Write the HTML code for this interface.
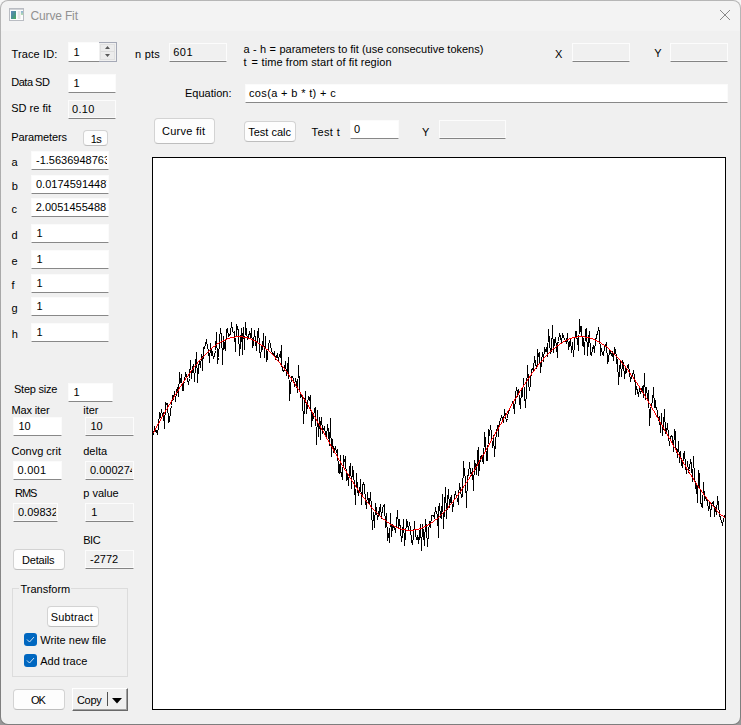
<!DOCTYPE html>
<html lang="en"><head><meta charset="utf-8"><title>Curve Fit</title>
<style>
html,body{margin:0;padding:0}
body{width:741px;height:725px;position:relative;overflow:hidden;background:linear-gradient(to bottom,#f6f6f6 0,#f6f6f6 40px,#989898 690px,#989898 100%);font:11px "Liberation Sans",sans-serif;color:#000}
#win{position:absolute;left:0;top:0;width:741px;height:725px;box-sizing:border-box;border:1px solid transparent;border-radius:8px;
 background:linear-gradient(to bottom,#f3f3f3 0,#f3f3f3 30px,#f0f0f0 30px,#f0f0f0 100%) padding-box,linear-gradient(to bottom,#b6b6b6 0,#a8a8a8 300px,#8a8a8a 500px,#7e7e7e 100%) border-box}
#win>*{position:absolute}
.t{white-space:nowrap;line-height:13px;height:13px}
.in{box-sizing:border-box;background:#fff;border:1px solid #fbfbfb;border-bottom:1px solid #888;border-radius:1px;overflow:hidden;white-space:nowrap}
.ro{background:#f0f0f0;border-color:#fcfcfc;border-bottom-color:#848484;box-shadow:inset 0 -1px 0 #f9f9f9}
.btn{box-sizing:border-box;background:#fdfdfd;border:1px solid #d3d3d3;border-bottom-color:#bebebe;border-radius:4px}
  .title{font-size:12px;color:#919191;left:29.5px;top:7px;line-height:16px;letter-spacing:-.15px}
.plot{left:151px;top:156px}
.cb{width:13px;height:13px;background:#0067c0;border-radius:3px}
.cb svg{position:absolute;left:0;top:0}
</style></head><body>
<div id="win">
<!-- title bar -->
<svg style="left:8px;top:7px" width="15" height="13" viewBox="0 0 15 13">
 <defs><linearGradient id="g1" x1="0" y1="0" x2="1" y2="1"><stop offset="0" stop-color="#6288bd"/><stop offset=".55" stop-color="#4a9390"/><stop offset="1" stop-color="#4fae55"/></linearGradient>
 <linearGradient id="g2" x1="0" y1="0" x2="0" y2="1"><stop offset="0" stop-color="#8db0d8"/><stop offset="1" stop-color="#b4e2ae"/></linearGradient></defs>
 <rect x=".5" y=".5" width="14" height="12" fill="#fdfdfd" stroke="#b9bcc2"/>
 <rect x="1" y="1" width="13" height="1" fill="#d0d2d6"/>
 <rect x="2" y="3" width="5" height="8" fill="url(#g1)"/>
 <rect x="8.7" y="3" width="2.8" height="8" fill="#e6e6e6"/>
 <rect x="12" y="3" width="2" height="4" fill="url(#g2)"/>
</svg>
<div class="t title" id="title">Curve Fit</div>
<svg style="left:718px;top:8px" width="12" height="12" viewBox="0 0 12 12"><path d="M1 1 L11 11 M11 1 L1 11" stroke="#888" stroke-width="1" fill="none"/></svg>

<!-- boxes -->
<div class="in" style="left:67px;top:41px;width:49px;height:20px;"></div>
<div class="in ro" style="left:168px;top:42px;width:58px;height:19px;"></div>
<div class="in ro" style="left:571px;top:42px;width:58px;height:19px;"></div>
<div class="in ro" style="left:669px;top:42px;width:58px;height:19px;"></div>
<div class="in" style="left:67px;top:73px;width:48px;height:19px;"></div>
<div class="in" style="left:244px;top:83px;width:483px;height:19px;"></div>
<div class="in ro" style="left:67px;top:99px;width:48px;height:19px;"></div>
<div class="in" style="left:349px;top:119px;width:49px;height:19px;"></div>
<div class="in ro" style="left:438px;top:119px;width:67px;height:19px;"></div>
<div class="in" style="left:30px;top:150px;width:78px;height:19px"><div style="position:absolute;left:0;top:0;bottom:0;right:1px;overflow:hidden"><span class="t" id="i_a" style="position:absolute;left:4px;top:2px">-1.5636948763</span></div></div>
<div class="in" style="left:30px;top:174px;width:78px;height:19px"><div style="position:absolute;left:0;top:0;bottom:0;right:1px;overflow:hidden"><span class="t" id="i_b" style="position:absolute;left:4px;top:2px">0.01745914487</span></div></div>
<div class="in" style="left:30px;top:197px;width:78px;height:19px;"></div>
<div class="in" style="left:30px;top:223px;width:78px;height:19px;"></div>
<div class="in" style="left:30px;top:249px;width:78px;height:19px;"></div>
<div class="in" style="left:30px;top:273px;width:78px;height:19px;"></div>
<div class="in" style="left:30px;top:296px;width:78px;height:19px;"></div>
<div class="in" style="left:30px;top:322px;width:78px;height:19px;"></div>
<div class="in" style="left:67px;top:382px;width:45px;height:19px;"></div>
<div class="in" style="left:12px;top:416px;width:49px;height:19px;"></div>
<div class="in ro" style="left:84px;top:416px;width:49px;height:19px;"></div>
<div class="in" style="left:12px;top:460px;width:49px;height:19px;"></div>
<div class="in ro" style="left:84px;top:460px;width:49px;height:19px"><div style="position:absolute;left:0;top:0;bottom:0;right:1px;overflow:hidden"><span class="t" id="i_delta" style="position:absolute;left:4px;top:2px">0.00027426</span></div></div>
<div class="in ro" style="left:12px;top:502px;width:45px;height:19px"><div style="position:absolute;left:0;top:0;bottom:0;right:1px;overflow:hidden"><span class="t" id="i_rms" style="position:absolute;left:4px;top:2px">0.098324</span></div></div>
<div class="in ro" style="left:84px;top:502px;width:49px;height:19px;"></div>
<div class="in ro" style="left:84px;top:549px;width:49px;height:19px;"></div>
<div class="btn" style="left:153px;top:117px;width:61px;height:26px"></div>
<div class="btn" style="left:243px;top:120px;width:52px;height:21px"></div>
<div class="btn" style="left:82px;top:129px;width:25px;height:16px"></div>
<div class="btn" style="left:12px;top:548px;width:52px;height:21px"></div>
<div class="btn" style="left:46px;top:605px;width:52px;height:21px"></div>
<div class="btn" style="left:12px;top:688px;width:52px;height:21px"></div>
<!-- spinner -->
<div style="left:98px;top:41px;width:18px;height:20px;box-sizing:border-box;border:1px solid #a5a9b6;border-left:none;background:#f0f0f0">
 <div style="position:absolute;left:1px;top:1px;width:15px;height:16px;box-sizing:border-box;background:#ececec;border:1px solid #e0e0e0"></div>
 <div style="position:absolute;left:2px;top:8px;width:13px;height:1px;background:#dcdcdc"></div>
 <svg style="position:absolute;left:0;top:0" width="17" height="18" viewBox="0 0 17 18"><path d="M6 6 L8.5 3 L11 6 Z M6 11 L8.5 14 L11 11 Z" fill="#5a5a5a"/></svg>
</div>

<!-- transform group -->
<div style="left:11px;top:587px;width:116px;height:89px;box-sizing:border-box;border:1px solid #dcdcdc"></div>
<div style="left:18px;top:582px;background:#f0f0f0;width:52px;height:13px"></div>
<div class="cb" style="left:23px;top:632px"><svg width="13" height="13" viewBox="0 0 13 13"><path d="M3 6.5 L5.5 9 L10 4" stroke="#e4eef8" stroke-width=".9" fill="none"/></svg></div>
<div class="cb" style="left:23px;top:653px"><svg width="13" height="13" viewBox="0 0 13 13"><path d="M3 6.5 L5.5 9 L10 4" stroke="#e4eef8" stroke-width=".9" fill="none"/></svg></div>

<!-- copy split button -->
<div style="left:71px;top:687px;width:56px;height:23px;box-sizing:border-box;background:#f0f0f0;border:1px solid;border-color:#fff #696969 #696969 #fff;box-shadow:inset -1px -1px 0 #a0a0a0">
 <div style="position:absolute;left:34px;top:3px;width:1px;height:14px;background:#505050"></div>
 <svg style="position:absolute;left:39px;top:9px" width="10" height="6" viewBox="0 0 10 6"><path d="M0 0 H10 L5 5.5 Z" fill="#000"/></svg>
</div>

<!-- text -->
<div class="t" id="traceid" style="left:10.50px;top:47px;letter-spacing:0.122px;">Trace ID:</div>
<div class="t" id="npts" style="left:134.00px;top:47px;letter-spacing:0.250px;">n pts</div>
<div class="t" id="help1a" style="left:242.50px;top:42px;letter-spacing:0.166px;">a - h =</div>
<div class="t" id="help1" style="left:278.50px;top:42px;letter-spacing:-0.008px;">parameters to fit (use consecutive tokens)</div>
<div class="t" id="help2a" style="left:242.50px;top:55px;letter-spacing:1.000px;">t =</div>
<div class="t" id="help2" style="left:260.50px;top:55px;letter-spacing:0.086px;">time from start of fit region</div>
<div class="t" id="X1" style="left:554.00px;top:47px;letter-spacing:0.000px;">X</div>
<div class="t" id="Y1" style="left:653.25px;top:46px;letter-spacing:0.000px;">Y</div>
<div class="t" id="datasd" style="left:10.25px;top:75px;letter-spacing:-0.497px;">Data SD</div>
<div class="t" id="equation" style="left:184.00px;top:86px;letter-spacing:-0.001px;">Equation:</div>
<div class="t" id="sdrefit" style="left:10.25px;top:101px;letter-spacing:0.000px;">SD re fit</div>
<div class="t" id="testt" style="left:310.50px;top:125px;letter-spacing:0.400px;">Test t</div>
<div class="t" id="Y2" style="left:421.00px;top:125px;letter-spacing:0.000px;">Y</div>
<div class="t" id="parameters" style="left:10.25px;top:130px;letter-spacing:-0.111px;">Parameters</div>
<div class="t" id="la" style="left:10.50px;top:155px;letter-spacing:0.000px;">a</div>
<div class="t" id="lb" style="left:10.75px;top:179px;letter-spacing:0.000px;">b</div>
<div class="t" id="lc" style="left:10.50px;top:202px;letter-spacing:0.000px;">c</div>
<div class="t" id="ld" style="left:10.50px;top:228px;letter-spacing:0.000px;">d</div>
<div class="t" id="le" style="left:10.50px;top:254px;letter-spacing:0.000px;">e</div>
<div class="t" id="lf" style="left:10.50px;top:278px;letter-spacing:0.000px;">f</div>
<div class="t" id="lg" style="left:10.50px;top:301px;letter-spacing:0.000px;">g</div>
<div class="t" id="lh" style="left:10.75px;top:327px;letter-spacing:0.000px;">h</div>
<div class="t" id="stepsize" style="left:13.00px;top:382px;letter-spacing:-0.250px;">Step size</div>
<div class="t" id="maxiter" style="left:10.50px;top:403px;letter-spacing:-0.143px;">Max iter</div>
<div class="t" id="iter" style="left:82.25px;top:403px;letter-spacing:0.000px;">iter</div>
<div class="t" id="convg" style="left:10.50px;top:444px;letter-spacing:-0.003px;">Convg crit</div>
<div class="t" id="delta" style="left:82.25px;top:444px;letter-spacing:0.006px;">delta</div>
<div class="t" id="rms" style="left:14.00px;top:486px;letter-spacing:-1.000px;">RMS</div>
<div class="t" id="pvalue" style="left:82.25px;top:486px;letter-spacing:0.003px;">p value</div>
<div class="t" id="bic" style="left:82.25px;top:533px;letter-spacing:-0.500px;">BIC</div>
<div class="t" id="transform" style="left:19.50px;top:582px;letter-spacing:0.001px;">Transform</div>
<div class="t" id="writenew" style="left:39.25px;top:633px;letter-spacing:0.000px;">Write new file</div>
<div class="t" id="addtrace" style="left:39.25px;top:654px;letter-spacing:-0.003px;">Add trace</div>
<div class="t" id="b_curvefit" style="left:161.00px;top:124px;letter-spacing:0.250px;">Curve fit</div>
<div class="t" id="b_testcalc" style="left:247.25px;top:125px;letter-spacing:0.000px;">Test calc</div>
<div class="t" id="b_1s" style="left:89.75px;top:132px;letter-spacing:-0.500px;">1s</div>
<div class="t" id="b_details" style="left:21.00px;top:553px;letter-spacing:-0.167px;">Details</div>
<div class="t" id="b_subtract" style="left:49.75px;top:610px;letter-spacing:0.140px;">Subtract</div>
<div class="t" id="b_ok" style="left:30.00px;top:693px;letter-spacing:-1.000px;">OK</div>
<div class="t" id="b_copy" style="left:76.00px;top:693px;letter-spacing:-0.331px;">Copy</div>
<div class="t" id="i_trace" style="left:72.50px;top:45px;letter-spacing:0.000px;">1</div>
<div class="t" id="i_npts" style="left:172.25px;top:45px;letter-spacing:0.500px;">601</div>
<div class="t" id="i_datasd" style="left:72.50px;top:76px;letter-spacing:0.000px;">1</div>
<div class="t" id="i_eq" style="left:248.00px;top:86px;letter-spacing:0.353px;">cos(a + b * t) + c</div>
<div class="t" id="i_sdrefit" style="left:71.00px;top:102px;letter-spacing:0.334px;">0.10</div>
<div class="t" id="i_testt" style="left:353.00px;top:122px;letter-spacing:0.000px;">0</div>
<div class="t" id="i_d" style="left:35.50px;top:226px;letter-spacing:0.000px;">1</div>
<div class="t" id="i_e" style="left:35.50px;top:252px;letter-spacing:0.000px;">1</div>
<div class="t" id="i_f" style="left:35.50px;top:276px;letter-spacing:0.000px;">1</div>
<div class="t" id="i_g" style="left:35.50px;top:299px;letter-spacing:0.000px;">1</div>
<div class="t" id="i_h" style="left:35.50px;top:325px;letter-spacing:0.000px;">1</div>
<div class="t" id="i_c" style="left:34.75px;top:200px;letter-spacing:0.003px;">2.0051455488</div>
<div class="t" id="i_step" style="left:72.50px;top:385px;letter-spacing:0.000px;">1</div>
<div class="t" id="i_maxiter" style="left:17.50px;top:419px;letter-spacing:0.000px;">10</div>
<div class="t" id="i_iter" style="left:89.50px;top:419px;letter-spacing:0.000px;">10</div>
<div class="t" id="i_convg" style="left:16.50px;top:463px;letter-spacing:0.250px;">0.001</div>
<div class="t" id="i_pvalue" style="left:90.25px;top:505px;letter-spacing:0.000px;">1</div>
<div class="t" id="i_bic" style="left:89.00px;top:552px;letter-spacing:0.000px;">-2772</div>

<svg class="plot" width="575" height="554" viewBox="152 157 575 554" shape-rendering="crispEdges">
<rect x="152.5" y="157.5" width="573" height="552" fill="#fff" stroke="#000" stroke-width="1"/>
<polyline fill="none" stroke="#000" stroke-width="1" points="153,435 154,426 155,431 156,430 157,434 158,426 159,412 160,417 161,409 162,415 163,412 163,412 164,428 165,402 166,404 167,403 168,422 169,421 170,411 171,405 172,396 173,398 174,391 175,401 176,390 177,388 178,396 179,372 180,382 181,374 182,390 183,390 183,384 184,381 185,372 186,375 187,380 188,383 189,378 190,360 191,378 192,367 193,364 194,381 195,365 196,352 197,382 198,365 199,362 200,367 201,354 202,358 202,370 203,347 204,348 205,344 206,339 207,348 208,349 209,362 210,343 211,354 212,352 213,358 214,355 215,350 216,332 217,363 218,357 219,340 220,328 221,336 222,359 222,364 223,336 224,346 225,350 226,329 227,328 228,336 229,335 230,333 231,322 232,331 233,332 234,331 235,351 236,324 237,327 238,331 239,355 240,342 241,328 242,354 242,338 243,327 244,349 245,322 246,332 247,339 248,335 249,332 250,337 251,328 252,346 253,344 254,330 255,340 256,350 257,333 258,328 259,347 260,357 261,346 261,346 262,348 263,333 264,357 265,336 266,361 267,357 268,344 269,341 270,344 271,350 272,353 273,354 274,351 275,359 276,356 277,354 278,360 279,354 280,357 281,345 281,362 282,370 283,371 284,369 285,361 286,375 287,369 288,357 289,400 290,387 291,376 292,376 293,379 294,386 295,378 296,383 297,392 298,365 299,386 300,397 301,394 301,396 302,397 303,423 304,404 305,391 306,413 307,404 308,396 309,399 310,395 311,426 312,415 313,417 314,409 315,407 316,444 317,410 318,436 319,417 320,439 320,425 321,417 322,432 323,430 324,426 325,434 326,438 327,424 328,431 329,445 330,418 331,456 332,439 333,451 334,449 335,446 336,452 337,449 338,472 339,473 340,455 340,471 341,473 342,479 343,455 344,461 345,456 346,480 347,473 348,485 349,469 350,463 351,488 352,466 353,473 354,485 355,504 356,473 357,489 358,495 359,487 360,488 360,479 361,504 362,485 363,483 364,485 365,501 366,508 367,492 368,502 369,503 370,492 371,509 372,529 373,512 374,527 375,503 376,509 377,519 378,514 379,507 379,515 380,504 381,518 382,508 383,505 384,504 385,527 386,513 387,540 388,533 389,542 390,513 391,536 392,525 393,527 394,526 395,532 396,524 397,510 398,527 399,523 399,519 400,530 401,541 402,534 403,519 404,545 405,535 406,520 407,522 408,530 409,522 410,528 411,541 412,544 413,536 414,521 415,535 416,538 417,536 418,543 419,530 419,539 420,524 421,550 422,524 423,533 424,545 425,519 426,528 427,546 428,532 429,521 430,527 431,515 432,515 433,515 434,517 435,507 436,513 437,514 438,537 438,508 439,503 440,517 441,518 442,494 443,528 444,506 445,487 446,518 447,501 448,489 449,507 450,499 451,495 452,511 453,502 454,497 455,491 456,497 457,498 458,504 458,497 459,483 460,490 461,497 462,496 463,461 464,474 465,477 466,507 467,475 468,475 469,462 470,472 471,475 472,468 473,490 474,460 475,465 476,474 477,453 478,447 478,475 479,467 480,456 481,455 482,459 483,463 484,432 485,441 486,460 487,460 488,429 489,435 490,425 491,433 492,447 493,435 494,456 495,441 496,433 497,425 498,436 498,428 499,421 500,420 501,416 502,418 503,422 504,409 505,415 506,421 507,418 508,410 509,410 510,406 511,405 512,402 513,404 514,413 515,395 516,387 517,392 517,396 518,389 519,400 520,408 521,388 522,396 523,378 524,394 525,407 526,391 527,365 528,382 529,390 530,383 531,369 532,368 533,370 534,356 535,362 536,368 537,361 537,349 538,355 539,353 540,372 541,362 542,352 543,361 544,347 545,351 546,347 547,356 548,329 549,341 550,353 551,350 552,325 553,352 554,340 555,338 556,346 557,357 557,343 558,341 559,333 560,336 561,342 562,334 563,336 564,339 565,340 566,342 567,333 568,349 569,344 570,338 571,352 572,342 573,356 574,344 575,331 576,331 576,337 577,339 578,350 579,319 580,331 581,326 582,345 583,338 584,354 585,329 586,328 587,355 588,338 589,331 590,354 591,355 592,348 593,345 594,352 595,339 596,337 596,334 597,334 598,327 599,331 600,355 601,348 602,354 603,355 604,346 605,346 606,342 607,362 608,360 609,349 610,352 611,354 612,352 613,360 614,347 615,351 616,356 616,363 617,359 618,384 619,369 620,360 621,376 622,361 623,363 624,378 625,369 626,371 627,365 628,364 629,372 630,381 631,376 632,376 633,370 634,376 635,387 635,394 636,386 637,391 638,396 639,388 640,393 641,389 642,387 643,397 644,373 645,399 646,387 647,398 648,390 649,425 650,411 651,403 652,402 653,387 654,407 655,400 655,407 656,407 657,412 658,420 659,416 660,432 661,413 662,435 663,425 664,409 665,433 666,432 667,423 668,435 669,445 670,437 671,435 672,436 673,451 674,429 675,432 675,449 676,448 677,457 678,441 679,462 680,451 681,464 682,467 683,455 684,451 685,466 686,473 687,461 688,471 689,469 690,459 691,464 692,481 693,456 694,479 694,473 695,488 696,484 697,502 698,470 699,475 700,501 701,505 702,507 703,482 704,499 705,497 706,500 707,500 708,510 709,501 710,516 711,504 712,502 713,501 714,509 714,516 715,507 716,514 717,496 718,505 719,514 720,518 721,521 722,524 723,520 724,515" transform="translate(.5 .5)"/>
<path fill="#f00" d="M153 432h1v1h-1zM154 430h1v2h-1zM155 428h1v2h-1zM156 426h1v2h-1zM157 424h1v2h-1zM158 423h1v1h-1zM159 421h1v2h-1zM160 419h1v2h-1zM161 417h1v2h-1zM162 416h1v1h-1zM163 414h1v2h-1zM164 412h1v2h-1zM165 410h1v2h-1zM166 409h1v1h-1zM167 407h1v2h-1zM168 405h1v2h-1zM169 404h1v1h-1zM170 402h1v2h-1zM171 400h1v2h-1zM172 399h1v1h-1zM173 397h1v2h-1zM174 395h1v2h-1zM175 394h1v1h-1zM176 392h1v2h-1zM177 391h1v1h-1zM178 389h1v2h-1zM179 387h1v2h-1zM180 386h1v1h-1zM181 384h1v2h-1zM182 383h1v1h-1zM183 381h1v2h-1zM184 380h1v1h-1zM185 378h1v2h-1zM186 377h1v1h-1zM187 376h1v1h-1zM188 374h1v2h-1zM189 373h1v1h-1zM190 371h1v2h-1zM191 370h1v1h-1zM192 369h1v1h-1zM193 367h1v2h-1zM194 366h1v1h-1zM195 365h1v1h-1zM196 364h1v1h-1zM197 362h1v2h-1zM198 361h1v1h-1zM199 360h1v1h-1zM200 359h1v1h-1zM201 358h1v1h-1zM202 357h1v1h-1zM203 356h1v1h-1zM204 355h1v1h-1zM205 354h1v1h-1zM206 353h1v1h-1zM207 352h1v1h-1zM208 351h1v1h-1zM209 350h1v1h-1zM210 349h1v1h-1zM211 348h1v1h-1zM212 347h1v1h-1zM213 346h1v1h-1zM214 346h1v1h-1zM215 345h1v1h-1zM216 344h1v1h-1zM217 343h1v1h-1zM218 343h1v1h-1zM219 342h1v1h-1zM220 342h1v1h-1zM221 341h1v1h-1zM222 341h1v1h-1zM223 340h1v1h-1zM224 340h1v1h-1zM225 339h1v1h-1zM226 339h1v1h-1zM227 338h1v1h-1zM228 338h1v1h-1zM229 338h1v1h-1zM230 337h1v1h-1zM231 337h1v1h-1zM232 337h1v1h-1zM233 337h1v1h-1zM234 337h1v1h-1zM235 336h1v1h-1zM236 336h1v1h-1zM237 336h1v1h-1zM238 336h1v1h-1zM239 336h1v1h-1zM240 336h1v1h-1zM241 336h1v1h-1zM242 336h1v1h-1zM243 337h1v1h-1zM244 337h1v1h-1zM245 337h1v1h-1zM246 337h1v1h-1zM247 337h1v1h-1zM248 338h1v1h-1zM249 338h1v1h-1zM250 338h1v1h-1zM251 339h1v1h-1zM252 339h1v1h-1zM253 340h1v1h-1zM254 340h1v1h-1zM255 341h1v1h-1zM256 341h1v1h-1zM257 342h1v1h-1zM258 343h1v1h-1zM259 343h1v1h-1zM260 344h1v1h-1zM261 345h1v1h-1zM262 345h1v1h-1zM263 346h1v1h-1zM264 347h1v1h-1zM265 348h1v1h-1zM266 349h1v1h-1zM267 349h1v1h-1zM268 350h1v1h-1zM269 351h1v1h-1zM270 352h1v1h-1zM271 353h1v1h-1zM272 354h1v1h-1zM273 355h1v1h-1zM274 356h1v1h-1zM275 357h1v2h-1zM276 359h1v1h-1zM277 360h1v1h-1zM278 361h1v1h-1zM279 362h1v1h-1zM280 363h1v2h-1zM281 365h1v1h-1zM282 366h1v1h-1zM283 367h1v1h-1zM284 368h1v2h-1zM285 370h1v1h-1zM286 371h1v1h-1zM287 372h1v2h-1zM288 374h1v1h-1zM289 375h1v2h-1zM290 377h1v1h-1zM291 378h1v2h-1zM292 380h1v1h-1zM293 381h1v2h-1zM294 383h1v1h-1zM295 384h1v2h-1zM296 386h1v1h-1zM297 387h1v2h-1zM298 389h1v1h-1zM299 390h1v2h-1zM300 392h1v2h-1zM301 394h1v1h-1zM302 395h1v2h-1zM303 397h1v2h-1zM304 399h1v1h-1zM305 400h1v2h-1zM306 402h1v2h-1zM307 404h1v1h-1zM308 405h1v2h-1zM309 407h1v2h-1zM310 409h1v1h-1zM311 410h1v2h-1zM312 412h1v2h-1zM313 414h1v2h-1zM314 416h1v1h-1zM315 417h1v2h-1zM316 419h1v2h-1zM317 421h1v2h-1zM318 423h1v1h-1zM319 424h1v2h-1zM320 426h1v2h-1zM321 428h1v2h-1zM322 430h1v1h-1zM323 431h1v2h-1zM324 433h1v2h-1zM325 435h1v2h-1zM326 437h1v2h-1zM327 439h1v1h-1zM328 440h1v2h-1zM329 442h1v2h-1zM330 444h1v2h-1zM331 446h1v1h-1zM332 447h1v2h-1zM333 449h1v2h-1zM334 451h1v2h-1zM335 453h1v1h-1zM336 454h1v2h-1zM337 456h1v2h-1zM338 458h1v2h-1zM339 460h1v1h-1zM340 461h1v2h-1zM341 463h1v2h-1zM342 465h1v1h-1zM343 466h1v2h-1zM344 468h1v2h-1zM345 470h1v1h-1zM346 471h1v2h-1zM347 473h1v1h-1zM348 474h1v2h-1zM349 476h1v2h-1zM350 478h1v1h-1zM351 479h1v2h-1zM352 481h1v1h-1zM353 482h1v2h-1zM354 484h1v1h-1zM355 485h1v2h-1zM356 487h1v1h-1zM357 488h1v2h-1zM358 490h1v1h-1zM359 491h1v2h-1zM360 493h1v1h-1zM361 494h1v1h-1zM362 495h1v2h-1zM363 497h1v1h-1zM364 498h1v1h-1zM365 499h1v2h-1zM366 501h1v1h-1zM367 502h1v1h-1zM368 503h1v1h-1zM369 504h1v1h-1zM370 505h1v2h-1zM371 507h1v1h-1zM372 508h1v1h-1zM373 509h1v1h-1zM374 510h1v1h-1zM375 511h1v1h-1zM376 512h1v1h-1zM377 513h1v1h-1zM378 514h1v1h-1zM379 515h1v1h-1zM380 516h1v1h-1zM381 517h1v1h-1zM382 518h1v1h-1zM383 519h1v1h-1zM384 519h1v1h-1zM385 520h1v1h-1zM386 521h1v1h-1zM387 522h1v1h-1zM388 522h1v1h-1zM389 523h1v1h-1zM390 524h1v1h-1zM391 524h1v1h-1zM392 525h1v1h-1zM393 525h1v1h-1zM394 526h1v1h-1zM395 526h1v1h-1zM396 527h1v1h-1zM397 527h1v1h-1zM398 528h1v1h-1zM399 528h1v1h-1zM400 528h1v1h-1zM401 529h1v1h-1zM402 529h1v1h-1zM403 529h1v1h-1zM404 529h1v1h-1zM405 529h1v1h-1zM406 530h1v1h-1zM407 530h1v1h-1zM408 530h1v1h-1zM409 530h1v1h-1zM410 530h1v1h-1zM411 530h1v1h-1zM412 530h1v1h-1zM413 530h1v1h-1zM414 529h1v1h-1zM415 529h1v1h-1zM416 529h1v1h-1zM417 529h1v1h-1zM418 529h1v1h-1zM419 528h1v1h-1zM420 528h1v1h-1zM421 528h1v1h-1zM422 527h1v1h-1zM423 527h1v1h-1zM424 526h1v1h-1zM425 526h1v1h-1zM426 525h1v1h-1zM427 525h1v1h-1zM428 524h1v1h-1zM429 524h1v1h-1zM430 523h1v1h-1zM431 522h1v1h-1zM432 522h1v1h-1zM433 521h1v1h-1zM434 520h1v1h-1zM435 519h1v1h-1zM436 519h1v1h-1zM437 518h1v1h-1zM438 517h1v1h-1zM439 516h1v1h-1zM440 515h1v1h-1zM441 514h1v1h-1zM442 513h1v1h-1zM443 512h1v1h-1zM444 511h1v1h-1zM445 510h1v1h-1zM446 509h1v1h-1zM447 508h1v1h-1zM448 506h1v2h-1zM449 505h1v1h-1zM450 504h1v1h-1zM451 503h1v1h-1zM452 502h1v1h-1zM453 500h1v2h-1zM454 499h1v1h-1zM455 498h1v1h-1zM456 496h1v2h-1zM457 495h1v1h-1zM458 493h1v2h-1zM459 492h1v1h-1zM460 491h1v1h-1zM461 489h1v2h-1zM462 488h1v1h-1zM463 486h1v2h-1zM464 485h1v1h-1zM465 483h1v2h-1zM466 482h1v1h-1zM467 480h1v2h-1zM468 479h1v1h-1zM469 477h1v2h-1zM470 475h1v2h-1zM471 474h1v1h-1zM472 472h1v2h-1zM473 471h1v1h-1zM474 469h1v2h-1zM475 467h1v2h-1zM476 466h1v1h-1zM477 464h1v2h-1zM478 462h1v2h-1zM479 460h1v2h-1zM480 459h1v1h-1zM481 457h1v2h-1zM482 455h1v2h-1zM483 454h1v1h-1zM484 452h1v2h-1zM485 450h1v2h-1zM486 448h1v2h-1zM487 447h1v1h-1zM488 445h1v2h-1zM489 443h1v2h-1zM490 441h1v2h-1zM491 439h1v2h-1zM492 438h1v1h-1zM493 436h1v2h-1zM494 434h1v2h-1zM495 432h1v2h-1zM496 431h1v1h-1zM497 429h1v2h-1zM498 427h1v2h-1zM499 425h1v2h-1zM500 424h1v1h-1zM501 422h1v2h-1zM502 420h1v2h-1zM503 418h1v2h-1zM504 417h1v1h-1zM505 415h1v2h-1zM506 413h1v2h-1zM507 411h1v2h-1zM508 410h1v1h-1zM509 408h1v2h-1zM510 406h1v2h-1zM511 404h1v2h-1zM512 403h1v1h-1zM513 401h1v2h-1zM514 399h1v2h-1zM515 398h1v1h-1zM516 396h1v2h-1zM517 395h1v1h-1zM518 393h1v2h-1zM519 391h1v2h-1zM520 390h1v1h-1zM521 388h1v2h-1zM522 387h1v1h-1zM523 385h1v2h-1zM524 384h1v1h-1zM525 382h1v2h-1zM526 381h1v1h-1zM527 379h1v2h-1zM528 378h1v1h-1zM529 376h1v2h-1zM530 375h1v1h-1zM531 373h1v2h-1zM532 372h1v1h-1zM533 371h1v1h-1zM534 369h1v2h-1zM535 368h1v1h-1zM536 367h1v1h-1zM537 365h1v2h-1zM538 364h1v1h-1zM539 363h1v1h-1zM540 362h1v1h-1zM541 361h1v1h-1zM542 360h1v1h-1zM543 358h1v2h-1zM544 357h1v1h-1zM545 356h1v1h-1zM546 355h1v1h-1zM547 354h1v1h-1zM548 353h1v1h-1zM549 352h1v1h-1zM550 351h1v1h-1zM551 350h1v1h-1zM552 349h1v1h-1zM553 348h1v1h-1zM554 348h1v1h-1zM555 347h1v1h-1zM556 346h1v1h-1zM557 345h1v1h-1zM558 345h1v1h-1zM559 344h1v1h-1zM560 343h1v1h-1zM561 343h1v1h-1zM562 342h1v1h-1zM563 341h1v1h-1zM564 341h1v1h-1zM565 340h1v1h-1zM566 340h1v1h-1zM567 339h1v1h-1zM568 339h1v1h-1zM569 338h1v1h-1zM570 338h1v1h-1zM571 338h1v1h-1zM572 337h1v1h-1zM573 337h1v1h-1zM574 337h1v1h-1zM575 337h1v1h-1zM576 337h1v1h-1zM577 336h1v1h-1zM578 336h1v1h-1zM579 336h1v1h-1zM580 336h1v1h-1zM581 336h1v1h-1zM582 336h1v1h-1zM583 336h1v1h-1zM584 336h1v1h-1zM585 337h1v1h-1zM586 337h1v1h-1zM587 337h1v1h-1zM588 337h1v1h-1zM589 337h1v1h-1zM590 338h1v1h-1zM591 338h1v1h-1zM592 338h1v1h-1zM593 339h1v1h-1zM594 339h1v1h-1zM595 340h1v1h-1zM596 340h1v1h-1zM597 341h1v1h-1zM598 341h1v1h-1zM599 342h1v1h-1zM600 342h1v1h-1zM601 343h1v1h-1zM602 344h1v1h-1zM603 344h1v1h-1zM604 345h1v1h-1zM605 346h1v1h-1zM606 346h1v1h-1zM607 347h1v1h-1zM608 348h1v1h-1zM609 349h1v1h-1zM610 350h1v1h-1zM611 351h1v1h-1zM612 352h1v1h-1zM613 353h1v1h-1zM614 354h1v1h-1zM615 355h1v1h-1zM616 356h1v1h-1zM617 357h1v1h-1zM618 358h1v1h-1zM619 359h1v1h-1zM620 360h1v1h-1zM621 361h1v2h-1zM622 363h1v1h-1zM623 364h1v1h-1zM624 365h1v1h-1zM625 366h1v2h-1zM626 368h1v1h-1zM627 369h1v1h-1zM628 370h1v2h-1zM629 372h1v1h-1zM630 373h1v2h-1zM631 375h1v1h-1zM632 376h1v1h-1zM633 377h1v2h-1zM634 379h1v1h-1zM635 380h1v2h-1zM636 382h1v1h-1zM637 383h1v2h-1zM638 385h1v1h-1zM639 386h1v2h-1zM640 388h1v2h-1zM641 390h1v1h-1zM642 391h1v2h-1zM643 393h1v1h-1zM644 394h1v2h-1zM645 396h1v2h-1zM646 398h1v1h-1zM647 399h1v2h-1zM648 401h1v2h-1zM649 403h1v1h-1zM650 404h1v2h-1zM651 406h1v2h-1zM652 408h1v2h-1zM653 410h1v1h-1zM654 411h1v2h-1zM655 413h1v2h-1zM656 415h1v2h-1zM657 417h1v1h-1zM658 418h1v2h-1zM659 420h1v2h-1zM660 422h1v2h-1zM661 424h1v1h-1zM662 425h1v2h-1zM663 427h1v2h-1zM664 429h1v2h-1zM665 431h1v1h-1zM666 432h1v2h-1zM667 434h1v2h-1zM668 436h1v2h-1zM669 438h1v1h-1zM670 439h1v2h-1zM671 441h1v2h-1zM672 443h1v2h-1zM673 445h1v2h-1zM674 447h1v1h-1zM675 448h1v2h-1zM676 450h1v2h-1zM677 452h1v2h-1zM678 454h1v1h-1zM679 455h1v2h-1zM680 457h1v2h-1zM681 459h1v1h-1zM682 460h1v2h-1zM683 462h1v2h-1zM684 464h1v1h-1zM685 465h1v2h-1zM686 467h1v2h-1zM687 469h1v1h-1zM688 470h1v2h-1zM689 472h1v2h-1zM690 474h1v1h-1zM691 475h1v2h-1zM692 477h1v1h-1zM693 478h1v2h-1zM694 480h1v2h-1zM695 482h1v1h-1zM696 483h1v2h-1zM697 485h1v1h-1zM698 486h1v2h-1zM699 488h1v1h-1zM700 489h1v1h-1zM701 490h1v2h-1zM702 492h1v1h-1zM703 493h1v2h-1zM704 495h1v1h-1zM705 496h1v1h-1zM706 497h1v2h-1zM707 499h1v1h-1zM708 500h1v1h-1zM709 501h1v1h-1zM710 502h1v2h-1zM711 504h1v1h-1zM712 505h1v1h-1zM713 506h1v1h-1zM714 507h1v1h-1zM715 508h1v1h-1zM716 509h1v2h-1zM717 511h1v1h-1zM718 512h1v1h-1zM719 513h1v1h-1zM720 514h1v1h-1zM721 515h1v1h-1zM722 515h1v1h-1zM723 516h1v1h-1zM724 517h1v1h-1z"/>
</svg>
</div>
</body></html>
